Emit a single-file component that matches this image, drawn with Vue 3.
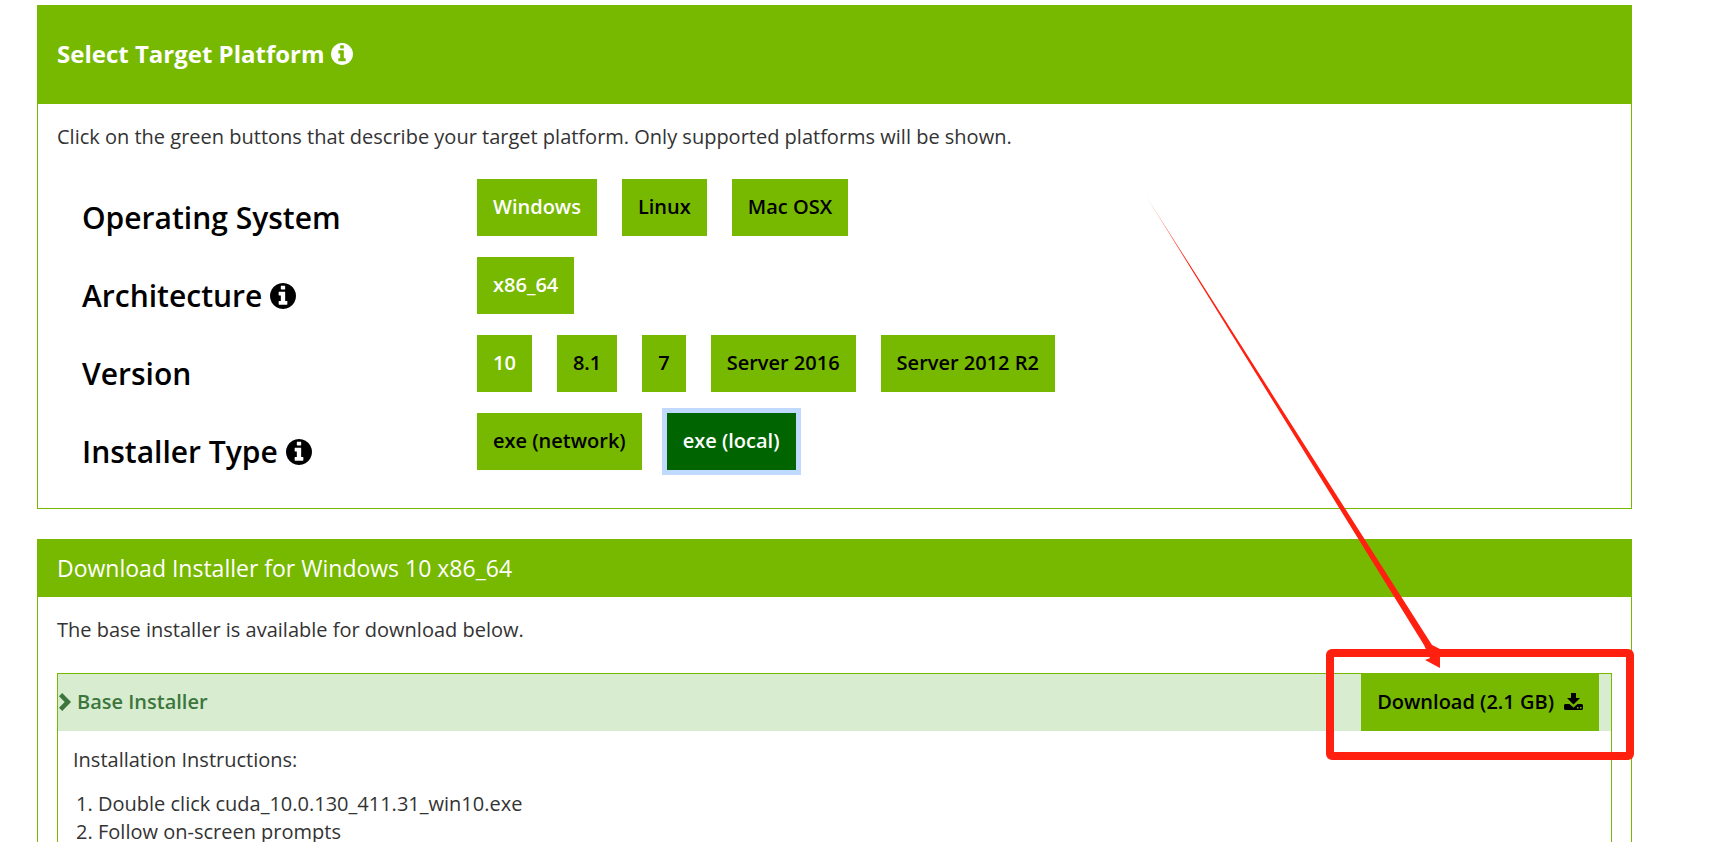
<script setup>
import { reactive } from 'vue'

const groups = reactive([
  { id: 'os', label: 'Operating System', info: false, selected: 'Windows', options: ['Windows', 'Linux', 'Mac OSX'] },
  { id: 'arch', label: 'Architecture', info: true, selected: 'x86_64', options: ['x86_64'] },
  { id: 'version', label: 'Version', info: false, selected: '10', options: ['10', '8.1', '7', 'Server 2016', 'Server 2012 R2'] },
  { id: 'type', label: 'Installer Type', info: true, selected: 'exe (local)', active: 'exe (local)', options: ['exe (network)', 'exe (local)'] }
])

const steps = ['Double click cuda_10.0.130_411.31_win10.exe', 'Follow on-screen prompts']

const infoPath = 'M1024 1248v-160q0-14-9-23t-23-9h-96v-512q0-14-9-23t-23-9h-320q-14 0-23 9t-9 23v160q0 14 9 23t23 9h96v320h-96q-14 0-23 9t-9 23v160q0 14 9 23t23 9h448q14 0 23-9t9-23zm-128-896v-160q0-14-9-23t-23-9h-192q-14 0-23 9t-9 23v160q0 14 9 23t23 9h192q14 0 23-9t9-23zm640 416q0 209-103 385.5t-279.5 279.5-385.5 103-385.5-103-279.5-279.5-103-385.5 103-385.5 279.5-279.5 385.5-103 385.5 103 279.5 279.5 103 385.5z'
</script>

<template>
  <main class="page">
    <section class="panel">
      <header class="panel-head tall">
        <h2 class="title">
          Select Target Platform
          <svg class="info small" viewBox="0 0 1536 1536" aria-hidden="true"><path :d="infoPath" /></svg>
        </h2>
      </header>
      <div class="panel-body">
        <p class="text">Click on the green buttons that describe your target platform. Only supported platforms will be shown.</p>
        <div class="groups">
          <div v-for="g in groups" :key="g.id" class="group" role="group" :aria-labelledby="g.id">
            <h3 :id="g.id" class="label">
              {{ g.label }}
              <svg v-if="g.info" class="info" viewBox="0 0 1536 1536" aria-hidden="true"><path :d="infoPath" /></svg>
            </h3>
            <div class="options">
              <button
                v-for="o in g.options"
                :key="o"
                type="button"
                class="btn"
                :class="{ selected: g.selected === o, active: g.active === o }"
                :aria-pressed="g.selected === o"
                @click="g.selected = o"
              >{{ o }}</button>
            </div>
          </div>
        </div>
      </div>
    </section>

    <section class="panel">
      <header class="panel-head">
        <h2 class="subtitle">Download Installer for Windows 10 x86_64</h2>
      </header>
      <div class="panel-body">
        <p class="text">The base installer is available for download below.</p>
        <div class="installer">
          <div class="installer-head">
            <a href="#base" class="toggle">
              <svg class="chevron" viewBox="0 0 12 18" aria-hidden="true"><path d="M3.2 0 12 9 3.2 18 0 14.8 5.7 9 0 3.2z" /></svg>
              Base Installer
            </a>
            <div class="download">
              <a href="#download" class="btn download-link">
                Download (2.1 GB)
                <svg class="tray" viewBox="0 0 19 17" aria-hidden="true">
                  <path d="M7 0h5v5h4L9.500 11.500 3 5h4z" />
                  <path fill-rule="evenodd" d="M1 11h4.500L9.500 14.500 13.500 11H18l1 1v4l-1 1H1l-1-1v-4zM13 14v1.500h1.500V14zM16 14v1.500h1.500V14z" />
                </svg>
              </a>
              <svg class="arrow" viewBox="0 0 296 473" aria-hidden="true">
                <defs>
                  <linearGradient id="fade" x1="0" y1="0" x2="0" y2="1">
                    <stop offset="0" stop-color="#ff2010" stop-opacity="0.4" />
                    <stop offset="0.15" stop-color="#ff2010" />
                  </linearGradient>
                </defs>
                <path fill="url(#fade)" d="M1 1 287 450 295 454V473L280 465 285 463 279 450z" />
              </svg>
              <span class="frame"></span>
            </div>
          </div>
          <div id="base" class="instructions">
            <p class="text">Installation Instructions:</p>
            <ol class="steps">
              <li v-for="s in steps" :key="s">{{ s }}</li>
            </ol>
          </div>
        </div>
      </div>
    </section>
  </main>
</template>

<style>
body {
  margin: 0;
  background: #fff;
}
</style>

<style scoped>
.page {
  box-sizing: border-box;
  height: 100vh;
  overflow: hidden;
  padding: 5px 85px 0 37px;
  font: 20px/28px "Open Sans", "Noto Sans", sans-serif;
  color: #333;
}
.panel {
  border: 1px solid #76b900;
  margin-bottom: 30px;
}
.panel-head {
  padding: 11px 19px 12px;
  background: #76b900;
  color: #fff;
}
.panel-head.tall {
  padding: 31px 19px 33px;
}
.title,
.subtitle,
.label,
.text {
  margin: 0;
}
.title {
  font-size: 24px;
  line-height: 34px;
  font-weight: 700;
}
.subtitle {
  font-size: 23px;
  line-height: 34px;
  font-weight: 400;
}
.panel-body {
  padding: 19px 19px 38px;
}
.groups {
  display: grid;
  gap: 21px;
  margin-top: 28px;
  padding-left: 25px;
}
.group {
  display: grid;
  grid-template-columns: 395px 1fr;
}
.label {
  padding-top: 22px;
  color: #000;
  font-size: 30px;
  line-height: 34px;
  font-weight: 600;
}
.info {
  width: 26px;
  height: 26px;
  fill: currentColor;
  vertical-align: -2px;
}
.info.small {
  width: 22px;
  height: 22px;
}
.options {
  display: flex;
  flex-wrap: wrap;
  align-items: flex-start;
  gap: 25px;
}
.btn {
  border: 0;
  margin: 0;
  padding: 14px 16px 16px;
  background: #76b900;
  color: #000;
  font: inherit;
  font-weight: 600;
  line-height: 27px;
  text-decoration: none;
  cursor: pointer;
}
.btn.selected {
  color: #fff;
}
.btn.active {
  background: #006400;
  box-shadow: 0 0 0 5px #c0daff;
}
.installer {
  margin-top: 29px;
  border: 1px solid #76b900;
}
.installer-head {
  display: flex;
  justify-content: space-between;
  align-items: center;
  padding-right: 12px;
  background: #d8ecd0;
}
.toggle {
  display: flex;
  align-items: center;
  gap: 6px;
  padding-left: 1px;
  padding-bottom: 2px;
  color: #3c763d;
  font-weight: 600;
  text-decoration: none;
}
.chevron {
  width: 12px;
  height: 18px;
  fill: currentColor;
}
.download {
  position: relative;
}
.download-link {
  display: flex;
  align-items: center;
  gap: 10px;
}
.tray {
  width: 19px;
  height: 17px;
  fill: currentColor;
}
.frame {
  position: absolute;
  inset: -25px -35px -29px -35px;
  border: 8px solid #ff2010;
  border-radius: 6px;
  pointer-events: none;
}
.arrow {
  position: absolute;
  right: 158px;
  bottom: 63px;
  width: 296px;
  height: 473px;
  pointer-events: none;
}
.instructions {
  padding: 15px 15px 20px;
}
.steps {
  margin: 16px 0 0;
  padding-left: 25px;
}
</style>
